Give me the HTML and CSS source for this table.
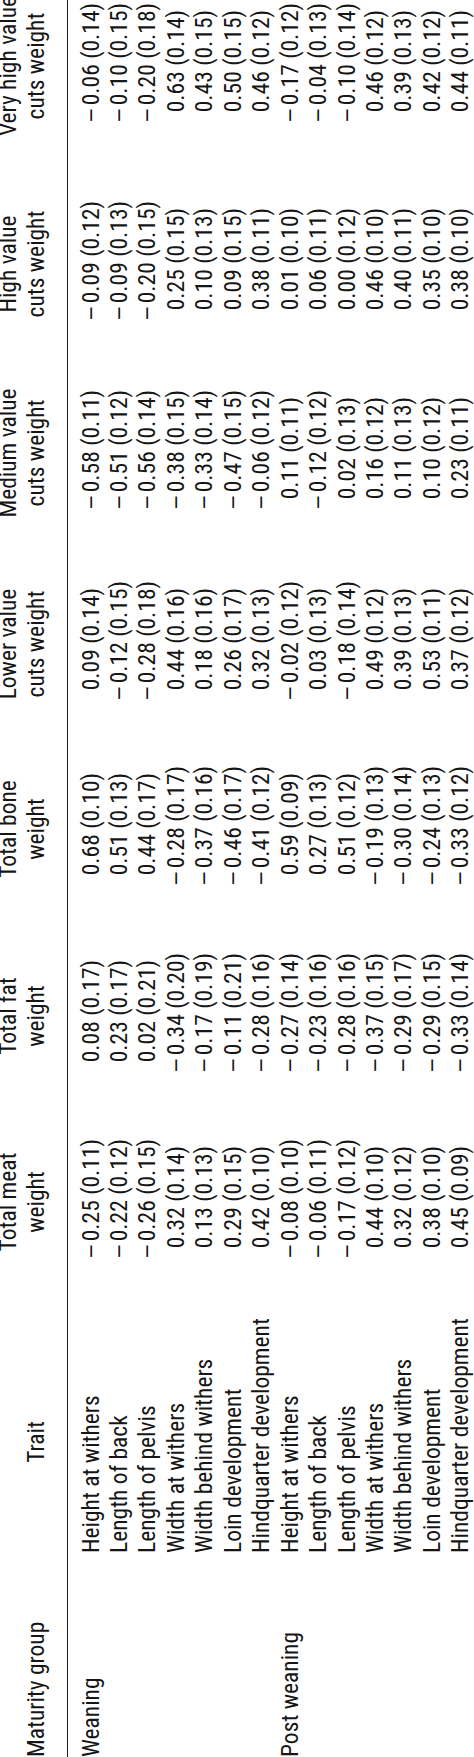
FILE: index.html
```html
<!DOCTYPE html>
<html lang="en">
<head>
<meta charset="utf-8">
<title>Table</title>
<link rel="stylesheet" href="styles.css">
</head>
<body>
<div class="page">
  <div class="table">
    <div class="thead">
      <div class="h grp">Maturity group</div>
      <div class="h trait">Trait</div>
      <div class="h val"><span>Total meat<br>weight</span></div>
      <div class="h val"><span>Total fat<br>weight</span></div>
      <div class="h val"><span>Total bone<br>weight</span></div>
      <div class="h val"><span>Lower value<br>cuts weight</span></div>
      <div class="h val"><span>Medium value<br>cuts weight</span></div>
      <div class="h val"><span>High value<br>cuts weight</span></div>
      <div class="h val"><span>Very high value<br>cuts weight</span></div>
    </div>
    <div class="tbody">
      <div class="c grp">Weaning</div><div class="c trait">Height at withers</div>
      <div class="c val"><span class="m">−</span>0.25 (0.11)</div><div class="c val">0.08 (0.17)</div><div class="c val">0.68 (0.10)</div><div class="c val">0.09 (0.14)</div><div class="c val"><span class="m">−</span>0.58 (0.11)</div><div class="c val"><span class="m">−</span>0.09 (0.12)</div><div class="c val"><span class="m">−</span>0.06 (0.14)</div>

      <div class="c grp"></div><div class="c trait">Length of back</div>
      <div class="c val"><span class="m">−</span>0.22 (0.12)</div><div class="c val">0.23 (0.17)</div><div class="c val">0.51 (0.13)</div><div class="c val"><span class="m">−</span>0.12 (0.15)</div><div class="c val"><span class="m">−</span>0.51 (0.12)</div><div class="c val"><span class="m">−</span>0.09 (0.13)</div><div class="c val"><span class="m">−</span>0.10 (0.15)</div>

      <div class="c grp"></div><div class="c trait">Length of pelvis</div>
      <div class="c val"><span class="m">−</span>0.26 (0.15)</div><div class="c val">0.02 (0.21)</div><div class="c val">0.44 (0.17)</div><div class="c val"><span class="m">−</span>0.28 (0.18)</div><div class="c val"><span class="m">−</span>0.56 (0.14)</div><div class="c val"><span class="m">−</span>0.20 (0.15)</div><div class="c val"><span class="m">−</span>0.20 (0.18)</div>

      <div class="c grp"></div><div class="c trait">Width at withers</div>
      <div class="c val">0.32 (0.14)</div><div class="c val"><span class="m">−</span>0.34 (0.20)</div><div class="c val"><span class="m">−</span>0.28 (0.17)</div><div class="c val">0.44 (0.16)</div><div class="c val"><span class="m">−</span>0.38 (0.15)</div><div class="c val">0.25 (0.15)</div><div class="c val">0.63 (0.14)</div>

      <div class="c grp"></div><div class="c trait">Width behind withers</div>
      <div class="c val">0.13 (0.13)</div><div class="c val"><span class="m">−</span>0.17 (0.19)</div><div class="c val"><span class="m">−</span>0.37 (0.16)</div><div class="c val">0.18 (0.16)</div><div class="c val"><span class="m">−</span>0.33 (0.14)</div><div class="c val">0.10 (0.13)</div><div class="c val">0.43 (0.15)</div>

      <div class="c grp"></div><div class="c trait">Loin development</div>
      <div class="c val">0.29 (0.15)</div><div class="c val"><span class="m">−</span>0.11 (0.21)</div><div class="c val"><span class="m">−</span>0.46 (0.17)</div><div class="c val">0.26 (0.17)</div><div class="c val"><span class="m">−</span>0.47 (0.15)</div><div class="c val">0.09 (0.15)</div><div class="c val">0.50 (0.15)</div>

      <div class="c grp"></div><div class="c trait">Hindquarter development</div>
      <div class="c val">0.42 (0.10)</div><div class="c val"><span class="m">−</span>0.28 (0.16)</div><div class="c val"><span class="m">−</span>0.41 (0.12)</div><div class="c val">0.32 (0.13)</div><div class="c val"><span class="m">−</span>0.06 (0.12)</div><div class="c val">0.38 (0.11)</div><div class="c val">0.46 (0.12)</div>

      <div class="c grp">Post weaning</div><div class="c trait">Height at withers</div>
      <div class="c val"><span class="m">−</span>0.08 (0.10)</div><div class="c val"><span class="m">−</span>0.27 (0.14)</div><div class="c val">0.59 (0.09)</div><div class="c val"><span class="m">−</span>0.02 (0.12)</div><div class="c val">0.11 (0.11)</div><div class="c val">0.01 (0.10)</div><div class="c val"><span class="m">−</span>0.17 (0.12)</div>

      <div class="c grp"></div><div class="c trait">Length of back</div>
      <div class="c val"><span class="m">−</span>0.06 (0.11)</div><div class="c val"><span class="m">−</span>0.23 (0.16)</div><div class="c val">0.27 (0.13)</div><div class="c val">0.03 (0.13)</div><div class="c val"><span class="m">−</span>0.12 (0.12)</div><div class="c val">0.06 (0.11)</div><div class="c val"><span class="m">−</span>0.04 (0.13)</div>

      <div class="c grp"></div><div class="c trait">Length of pelvis</div>
      <div class="c val"><span class="m">−</span>0.17 (0.12)</div><div class="c val"><span class="m">−</span>0.28 (0.16)</div><div class="c val">0.51 (0.12)</div><div class="c val"><span class="m">−</span>0.18 (0.14)</div><div class="c val">0.02 (0.13)</div><div class="c val">0.00 (0.12)</div><div class="c val"><span class="m">−</span>0.10 (0.14)</div>

      <div class="c grp"></div><div class="c trait">Width at withers</div>
      <div class="c val">0.44 (0.10)</div><div class="c val"><span class="m">−</span>0.37 (0.15)</div><div class="c val"><span class="m">−</span>0.19 (0.13)</div><div class="c val">0.49 (0.12)</div><div class="c val">0.16 (0.12)</div><div class="c val">0.46 (0.10)</div><div class="c val">0.46 (0.12)</div>

      <div class="c grp"></div><div class="c trait">Width behind withers</div>
      <div class="c val">0.32 (0.12)</div><div class="c val"><span class="m">−</span>0.29 (0.17)</div><div class="c val"><span class="m">−</span>0.30 (0.14)</div><div class="c val">0.39 (0.13)</div><div class="c val">0.11 (0.13)</div><div class="c val">0.40 (0.11)</div><div class="c val">0.39 (0.13)</div>

      <div class="c grp"></div><div class="c trait">Loin development</div>
      <div class="c val">0.38 (0.10)</div><div class="c val"><span class="m">−</span>0.29 (0.15)</div><div class="c val"><span class="m">−</span>0.24 (0.13)</div><div class="c val">0.53 (0.11)</div><div class="c val">0.10 (0.12)</div><div class="c val">0.35 (0.10)</div><div class="c val">0.42 (0.12)</div>

      <div class="c grp"></div><div class="c trait">Hindquarter development</div>
      <div class="c val">0.45 (0.09)</div><div class="c val"><span class="m">−</span>0.33 (0.14)</div><div class="c val"><span class="m">−</span>0.33 (0.12)</div><div class="c val">0.37 (0.12)</div><div class="c val">0.23 (0.11)</div><div class="c val">0.38 (0.10)</div><div class="c val">0.44 (0.11)</div>
    </div>
  </div>
</div>
</body>
</html>
```
FILE: styles.css
```css
html, body {
  margin: 0;
  padding: 0;
  background: #ffffff;
}

.page {
  width: 474px;
  height: 1757px;
  overflow: hidden;
  position: relative;
  background: #ffffff;
}

.table {
  width: 1757px;
  transform-origin: 0 0;
  transform: translate(-6px, 1757px) rotate(-90deg);
  font-family: "Liberation Sans Narrow", "Arial Narrow", "Roboto Condensed", "Liberation Sans", sans-serif;
  font-size: 23.5px;
  line-height: 28.46px;
  color: #161616;
  white-space: nowrap;
}

.thead,
.tbody {
  display: grid;
  grid-template-columns: 204px 222px 185px 186px 187px 185px 191px 189px 198px;
}

.thead {
  align-items: end;
  padding-bottom: 16px;
  border-bottom: 1px solid #1e1e1e;
}

.tbody {
  grid-auto-rows: 28.46px;
  padding-top: 8.6px;
}

.grp {
  justify-self: start;
}

.trait {
  justify-self: start;
}

.h.trait {
  justify-self: stretch;
  text-align: center;
}

.val {
  justify-self: end;
  width: 112px;
  text-align: right;
}

.h.val {
  display: flex;
  justify-content: center;
}

.h.val span {
  display: block;
  text-align: center;
}

.m {
  font-family: "Liberation Sans", sans-serif;
  margin-right: 3px;
}
```
